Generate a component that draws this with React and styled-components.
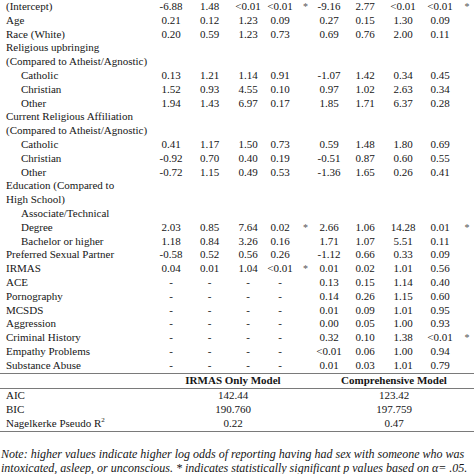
import React from "react";
import styled, { createGlobalStyle } from "styled-components";

const Global = createGlobalStyle`
  html, body { margin: 0; padding: 0; background: #ffffff; }
  body { font-family: "Liberation Serif", "Times New Roman", serif; color: #161616; overflow: hidden; }
`;

const Page = styled.div`
  width: 474px;
  height: 474px;
  overflow: hidden;
  background: #fff;
`;

const COLS = "152px 38px 39px 38px 26px 25px 22px 50px 26px 48px 6px";

const Body = styled.div`
  display: grid;
  grid-template-columns: ${COLS};
  grid-auto-rows: 13.8px;
  font-size: 11px;
  line-height: 13.8px;
`;

const Label = styled.div`
  padding-left: ${(p) => (p.$indent ? 21 : 6)}px;
  white-space: nowrap;
  grid-column: ${(p) => (p.$full ? "1 / -1" : "auto")};
`;

const Cell = styled.div`
  display: flex;
  justify-content: center;
  white-space: nowrap;
`;

const Star = styled(Cell)`
  color: #555;
  font-size: 10px;
`;

const Rule = styled.div`
  height: 1.5px;
  background: #7a7a7a;
`;

const Fit = styled.div`
  display: grid;
  grid-template-columns: 152px 162px 160px;
  grid-auto-rows: 13.8px;
  font-size: 11px;
  line-height: 13.8px;
`;

const FitHead = styled.div`
  display: flex;
  justify-content: center;
  font-weight: bold;
  white-space: nowrap;
`;

const Sup = styled.sup`
  font-size: 7px;
  vertical-align: 5px;
  line-height: 0;
`;

const Note = styled.div`
  margin-top: 16px;
  font-size: 12px;
  line-height: 13.5px;
  font-style: italic;
  white-space: nowrap;
  padding-left: 1px;
`;

const rows = [
  { l: "(Intercept)", v: ["-6.88", "1.48", "<0.01", "<0.01", "*", "-9.16", "2.77", "<0.01", "<0.01", "*"] },
  { l: "Age", v: ["0.21", "0.12", "1.23", "0.09", "", "0.27", "0.15", "1.30", "0.09", ""] },
  { l: "Race (White)", v: ["0.20", "0.59", "1.23", "0.73", "", "0.69", "0.76", "2.00", "0.11", ""] },
  { l: "Religious upbringing", full: true },
  { l: "(Compared to Atheist/Agnostic)", full: true },
  { l: "Catholic", i: true, v: ["0.13", "1.21", "1.14", "0.91", "", "-1.07", "1.42", "0.34", "0.45", ""] },
  { l: "Christian", i: true, v: ["1.52", "0.93", "4.55", "0.10", "", "0.97", "1.02", "2.63", "0.34", ""] },
  { l: "Other", i: true, v: ["1.94", "1.43", "6.97", "0.17", "", "1.85", "1.71", "6.37", "0.28", ""] },
  { l: "Current Religious Affiliation", full: true },
  { l: "(Compared to Atheist/Agnostic)", full: true },
  { l: "Catholic", i: true, v: ["0.41", "1.17", "1.50", "0.73", "", "0.59", "1.48", "1.80", "0.69", ""] },
  { l: "Christian", i: true, v: ["-0.92", "0.70", "0.40", "0.19", "", "-0.51", "0.87", "0.60", "0.55", ""] },
  { l: "Other", i: true, v: ["-0.72", "1.15", "0.49", "0.53", "", "-1.36", "1.65", "0.26", "0.41", ""] },
  { l: "Education (Compared to", full: true },
  { l: "High School)", full: true },
  { l: "Associate/Technical", i: true, full: true },
  { l: "Degree", i: true, v: ["2.03", "0.85", "7.64", "0.02", "*", "2.66", "1.06", "14.28", "0.01", "*"] },
  { l: "Bachelor or higher", i: true, v: ["1.18", "0.84", "3.26", "0.16", "", "1.71", "1.07", "5.51", "0.11", ""] },
  { l: "Preferred Sexual Partner", v: ["-0.58", "0.52", "0.56", "0.26", "", "-1.12", "0.66", "0.33", "0.09", ""] },
  { l: "IRMAS", v: ["0.04", "0.01", "1.04", "<0.01", "*", "0.01", "0.02", "1.01", "0.56", ""] },
  { l: "ACE", v: ["-", "-", "-", "-", "", "0.13", "0.15", "1.14", "0.40", ""] },
  { l: "Pornography", v: ["-", "-", "-", "-", "", "0.14", "0.26", "1.15", "0.60", ""] },
  { l: "MCSDS", v: ["-", "-", "-", "-", "", "0.01", "0.09", "1.01", "0.95", ""] },
  { l: "Aggression", v: ["-", "-", "-", "-", "", "0.00", "0.05", "1.00", "0.93", ""] },
  { l: "Criminal History", v: ["-", "-", "-", "-", "", "0.32", "0.10", "1.38", "<0.01", "*"] },
  { l: "Empathy Problems", v: ["-", "-", "-", "-", "", "<0.01", "0.06", "1.00", "0.94", ""] },
  { l: "Substance Abuse", v: ["-", "-", "-", "-", "", "0.01", "0.03", "1.01", "0.79", ""] },
];

const fit = [
  { l: "AIC", a: "142.44", b: "123.42" },
  { l: "BIC", a: "190.760", b: "197.759" },
  { l: <>Nagelkerke Pseudo R<Sup>2</Sup></>, a: "0.22", b: "0.47" },
];

export default function App() {
  return (
    <Page>
      <Global />
      <Body>
        {rows.map((r, ri) => (
          <React.Fragment key={ri}>
            <Label $indent={r.i} $full={r.full}>{r.l}</Label>
            {!r.full &&
              r.v.map((v, ci) =>
                ci === 4 || ci === 9 ? (
                  <Star key={ci}>{v}</Star>
                ) : (
                  <Cell key={ci}>{v}</Cell>
                )
              )}
          </React.Fragment>
        ))}
      </Body>
      <Rule />
      <Fit>
        <div />
        <FitHead>IRMAS Only Model</FitHead>
        <FitHead>Comprehensive Model</FitHead>
      </Fit>
      <Rule />
      <Fit>
        {fit.map((f, i) => (
          <React.Fragment key={i}>
            <Label>{f.l}</Label>
            <Cell>{f.a}</Cell>
            <Cell>{f.b}</Cell>
          </React.Fragment>
        ))}
      </Fit>
      <Rule />
      <Note>
        <div>Note: higher values indicate higher log odds of reporting having had sex with someone who was</div>
        <div>intoxicated, asleep, or unconscious. * indicates statistically significant p values based on α= .05.</div>
      </Note>
    </Page>
  );
}
